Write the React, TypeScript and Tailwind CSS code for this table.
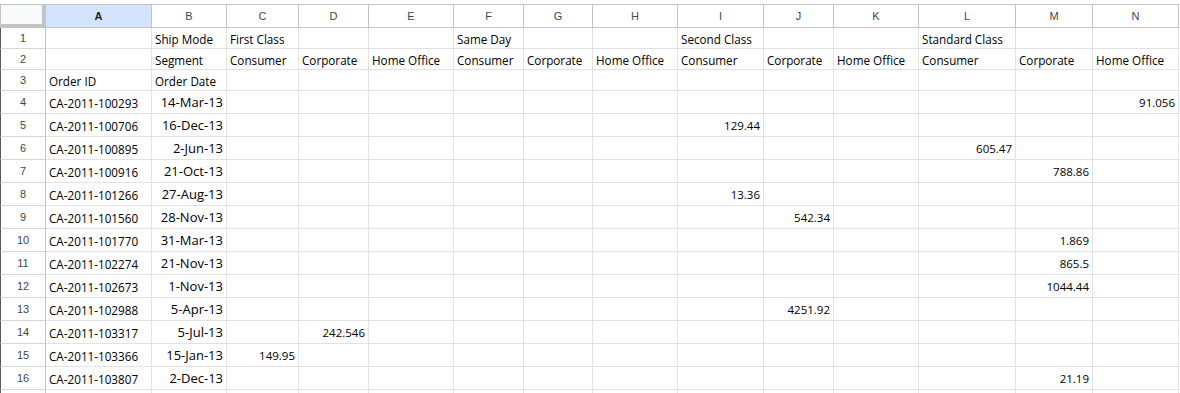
import React from 'react';

const cols = ['A', 'B', 'C', 'D', 'E', 'F', 'G', 'H', 'I', 'J', 'K', 'L', 'M', 'N'];

const gridCols =
  'grid grid-cols-[46px_106px_75px_72px_70px_85px_70px_69px_85px_86px_70px_85px_97px_77px_86px]';

const segs = ['Consumer', 'Corporate', 'Home Office'];

// label rows on top of the pivot
const topRows: string[][] = [
  ['', 'Ship Mode', 'First Class', '', '', 'Same Day', '', '', 'Second Class', '', '', 'Standard Class', '', ''],
  ['', 'Segment', ...segs, ...segs, ...segs, ...segs],
  ['Order ID', 'Order Date', '', '', '', '', '', '', '', '', '', '', '', ''],
];

const orders: [string, string, number, string][] = [
  ['CA-2011-100293', '14-Mar-13', 13, '91.056'],
  ['CA-2011-100706', '16-Dec-13', 8, '129.44'],
  ['CA-2011-100895', '2-Jun-13', 11, '605.47'],
  ['CA-2011-100916', '21-Oct-13', 12, '788.86'],
  ['CA-2011-101266', '27-Aug-13', 8, '13.36'],
  ['CA-2011-101560', '28-Nov-13', 9, '542.34'],
  ['CA-2011-101770', '31-Mar-13', 12, '1.869'],
  ['CA-2011-102274', '21-Nov-13', 12, '865.5'],
  ['CA-2011-102673', '1-Nov-13', 12, '1044.44'],
  ['CA-2011-102988', '5-Apr-13', 9, '4251.92'],
  ['CA-2011-103317', '5-Jul-13', 3, '242.546'],
  ['CA-2011-103366', '15-Jan-13', 2, '149.95'],
  ['CA-2011-103807', '2-Dec-13', 12, '21.19'],
];

const cellFont = { fontFamily: '"Open Sans", "Noto Sans", sans-serif' };

const RowNum = ({ n, h }: { n?: number; h: string }) => (
  <div
    className={`${h} flex items-center justify-center border-l border-l-[#5a5a5a] border-r border-r-[#c4c4c4] border-b border-b-[#d6d6d6] bg-white text-[11px] text-[#444746] font-['Liberation_Sans',Arial,sans-serif]`}
  >
    {n}
  </div>
);

const App = () => {
  return (
    <div className="w-[1180px] h-[393px] overflow-hidden bg-white pt-[4px]">
      {/* column letters */}
      <div className={gridCols}>
        <div className="h-[24px] bg-[#f8f9fa] border-t border-t-[#c4c4c4] border-r-4 border-b-4 border-[#c4c4c4] border-l border-l-[#c4c4c4]" />
        {cols.map((c, i) => (
          <div
            key={c}
            className={`h-[24px] flex items-center justify-center border-t border-b border-r border-[#c4c4c4] text-[11px] font-['Liberation_Sans',Arial,sans-serif] ${
              i === 0 ? 'bg-[#d3e3fd] font-bold text-[#1f1f1f]' : 'bg-white text-[#444746]'
            }`}
          >
            {c}
          </div>
        ))}
      </div>

      {topRows.map((row, r) => (
        <div key={r} className={gridCols}>
          <RowNum n={r + 1} h="h-[21px]" />
          {row.map((v, i) => (
            <div
              key={i}
              style={cellFont}
              className="h-[21px] flex items-end pl-[3px] pb-[1px] border-r border-b border-[#e2e2e2] text-[11.7px] leading-[16px] text-black whitespace-nowrap overflow-hidden"
            >
              {v}
            </div>
          ))}
        </div>
      ))}

      {orders.map(([id, date, col, val], r) => (
        <div key={id} className={gridCols}>
          <RowNum n={r + 4} h="h-[23px]" />
          <div
            style={cellFont}
            className="h-[23px] flex items-end pl-[3px] pb-[2px] border-r border-b border-[#e2e2e2] text-[11.7px] leading-[16px] text-black whitespace-nowrap"
          >
            {id}
          </div>
          <div
            style={cellFont}
            className="h-[23px] flex items-end justify-end pr-[3px] pb-[2px] border-r border-b border-[#e2e2e2] text-[13px] leading-[17px] text-black whitespace-nowrap"
          >
            {date}
          </div>
          {cols.slice(2).map((_, k) => (
            <div
              key={k}
              style={cellFont}
              className="h-[23px] flex items-end justify-end pr-[3px] pb-[2px] border-r border-b border-[#e2e2e2] text-[11.5px] leading-[16px] text-black whitespace-nowrap"
            >
              {k + 2 === col ? val : ''}
            </div>
          ))}
        </div>
      ))}

      {/* row 17, only its top edge is in view */}
      <div className={gridCols}>
        <RowNum h="h-[23px]" />
        {cols.map((c) => (
          <div key={c} className="h-[23px] border-r border-b border-[#e2e2e2]" />
        ))}
      </div>
    </div>
  );
};

export default App;
